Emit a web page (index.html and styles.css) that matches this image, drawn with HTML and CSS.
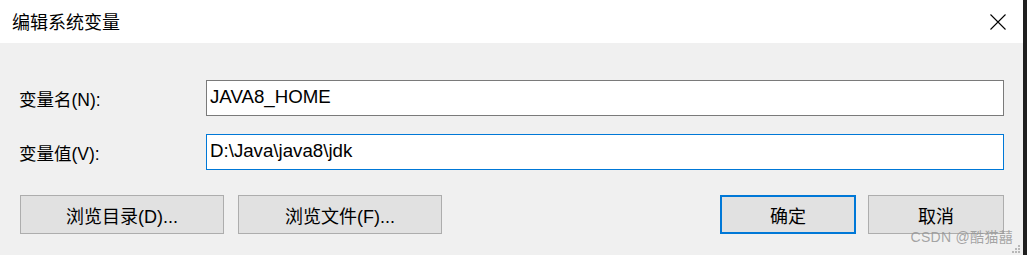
FILE: index.html
```html
<!DOCTYPE html>
<html lang="zh">
<head>
<meta charset="utf-8">
<title>编辑系统变量</title>
<link rel="stylesheet" href="styles.css">
</head>
<body>
<div class="screen">
  <div class="window">
    <div class="titlebar">
      <span class="title">编辑系统变量</span>
      <svg class="close" width="16" height="16" viewBox="0 0 16 16"><path d="M0.5 0.5 L15.5 15.5 M15.5 0.5 L0.5 15.5" stroke="#000" stroke-width="1.1" fill="none"/></svg>
    </div>
    <div class="content">
      <div class="fields">
        <label class="label">变量名(N):</label>
        <div class="input">JAVA8_HOME</div>
        <label class="label">变量值(V):</label>
        <div class="input focused">D:\Java\java8\jdk</div>
      </div>
      <div class="buttons">
        <div class="group">
          <div class="btn wide">浏览目录(D)...</div>
          <div class="btn wide">浏览文件(F)...</div>
        </div>
        <div class="group right">
          <div class="btn primary">确定</div>
          <div class="btn">取消</div>
        </div>
      </div>
      <div class="watermark">CSDN @酷猫囍</div>
      <svg class="grip" width="10" height="10" viewBox="0 0 10 10">
        <rect x="7" y="0" width="2" height="2" fill="#b8b8b8"/>
        <rect x="4" y="3" width="2" height="2" fill="#b8b8b8"/>
        <rect x="7" y="3" width="2" height="2" fill="#b8b8b8"/>
        <rect x="1" y="6" width="2" height="2" fill="#b8b8b8"/>
        <rect x="4" y="6" width="2" height="2" fill="#b8b8b8"/>
        <rect x="7" y="6" width="2" height="2" fill="#b8b8b8"/>
      </svg>
    </div>
  </div>
  <div class="edge"></div>
</div>
</body>
</html>
```
FILE: styles.css
```css
html, body {
  margin: 0;
  padding: 0;
}
body {
  width: 1027px;
  height: 255px;
  overflow: hidden;
  font-family: "Liberation Sans", "Noto Sans CJK SC", sans-serif;
  color: #000;
}
.screen {
  display: flex;
  height: 255px;
}
.window {
  width: 1023px;
  display: flex;
  flex-direction: column;
}
.edge {
  width: 4px;
  background: #1f1f1f;
}
.titlebar {
  height: 43px;
  background: #fff;
  display: flex;
  align-items: center;
  justify-content: space-between;
  padding: 0 17px 0 12px;
  box-sizing: border-box;
}
.title {
  font-size: 18px;
  font-family: "Noto Sans CJK SC", sans-serif;
  line-height: 1;
  margin-top: -1px;
}
.close {
  display: block;
  margin-top: 1px;
}
.content {
  flex: 1;
  background: #f0f0f0;
  position: relative;
  padding: 37px 19px 0 19px;
  box-sizing: border-box;
}
.fields {
  display: grid;
  grid-template-columns: 187px 798px;
  grid-template-rows: 36px 36px;
  row-gap: 18px;
  align-items: center;
}
.label {
  font-size: 17.5px;
  font-family: "Liberation Sans", "Noto Sans CJK SC", sans-serif;
}
.input {
  height: 36px;
  box-sizing: border-box;
  border: 1px solid #7a7a7a;
  background: #fff;
  font-size: 18.7px;
  line-height: 32px;
  padding-left: 3px;
  white-space: pre;
}
.input.focused {
  border-color: #0078d7;
}
.buttons {
  display: flex;
  justify-content: space-between;
  margin-top: 25px;
  margin-left: 1px;
  width: 984px;
}
.group {
  display: flex;
  gap: 14px;
}
.group.right {
  gap: 12px;
}
.btn {
  width: 136px;
  height: 39px;
  box-sizing: border-box;
  border: 1px solid #adadad;
  background: #e1e1e1;
  display: flex;
  align-items: center;
  justify-content: center;
  font-size: 18px;
  font-family: "Liberation Sans", "Noto Sans CJK SC", sans-serif;
}
.btn.wide {
  width: 204px;
}
.btn.primary {
  border: 2px solid #0078d7;
}
.watermark {
  position: absolute;
  right: 10px;
  bottom: 9px;
  font-size: 14px;
  color: rgba(150, 150, 150, 0.85);
  font-family: "Liberation Sans", "Noto Sans CJK SC", sans-serif;
  letter-spacing: 0.3px;
}
.grip {
  position: absolute;
  right: 2px;
  bottom: 0;
}
```
